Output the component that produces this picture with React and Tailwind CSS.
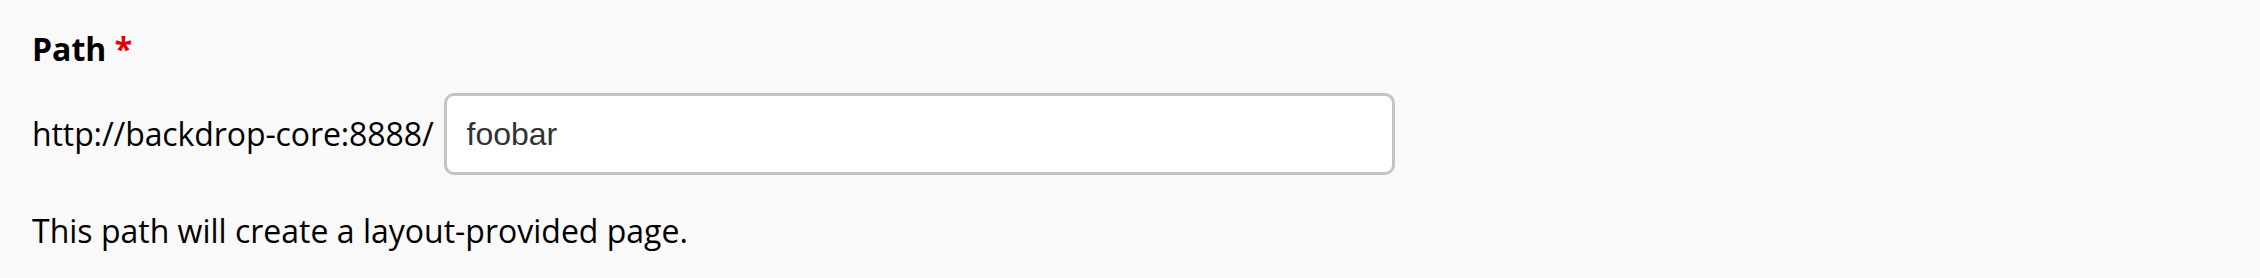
export default function App() {
  return (
    <div className="min-h-[278px] bg-[#f9f9f9] pl-[32px] pt-[25px] font-['Open_Sans',sans-serif] text-[32px] leading-[48px] text-black">
      <label htmlFor="path" className="block font-bold">
        Path <span className="text-[#e00000]">*</span>
      </label>
      <div className="mt-[20px] flex items-center">
        <span className="tracking-[-0.1px]">http://backdrop-core:8888/</span>
        <input
          id="path"
          type="text"
          defaultValue="foobar"
          className="ml-[10px] h-[82px] w-[951px] rounded-[10px] border-[3px] border-[#c4c4c4] bg-white px-[20px] font-['Liberation_Sans',Arial,sans-serif] text-[32px] text-[#333] outline-none"
        />
      </div>
      <p className="mt-[32px]">This path will create a layout-provided page.</p>
    </div>
  );
}
